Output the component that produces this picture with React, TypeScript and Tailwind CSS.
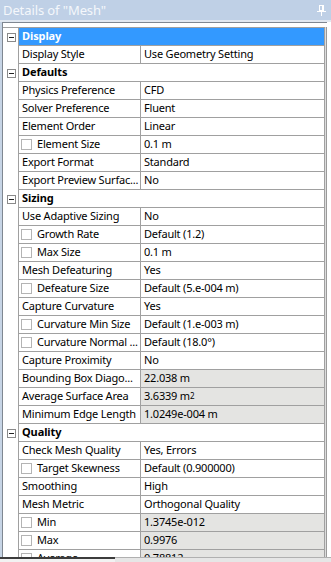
import React from "react";

type Row =
  | { kind: "h"; label: string; selected?: boolean }
  | { kind: "r"; label: string; value: React.ReactNode; check?: boolean; gray?: boolean };

const rows: Row[] = [
  { kind: "h", label: "Display", selected: true },
  { kind: "r", label: "Display Style", value: "Use Geometry Setting" },
  { kind: "h", label: "Defaults" },
  { kind: "r", label: "Physics Preference", value: "CFD" },
  { kind: "r", label: "Solver Preference", value: "Fluent" },
  { kind: "r", label: "Element Order", value: "Linear" },
  { kind: "r", label: "Element Size", value: "0.1 m", check: true },
  { kind: "r", label: "Export Format", value: "Standard" },
  { kind: "r", label: "Export Preview Surfac...", value: "No" },
  { kind: "h", label: "Sizing" },
  { kind: "r", label: "Use Adaptive Sizing", value: "No" },
  { kind: "r", label: "Growth Rate", value: "Default (1.2)", check: true },
  { kind: "r", label: "Max Size", value: "0.1 m", check: true },
  { kind: "r", label: "Mesh Defeaturing", value: "Yes" },
  { kind: "r", label: "Defeature Size", value: "Default (5.e-004 m)", check: true },
  { kind: "r", label: "Capture Curvature", value: "Yes" },
  { kind: "r", label: "Curvature Min Size", value: "Default (1.e-003 m)", check: true },
  { kind: "r", label: "Curvature Normal ...", value: "Default (18.0°)", check: true },
  { kind: "r", label: "Capture Proximity", value: "No" },
  { kind: "r", label: "Bounding Box Diago...", value: "22.038 m", gray: true },
  {
    kind: "r",
    label: "Average Surface Area",
    value: (
      <span>
        3.6339 m<sup className="text-[8px] relative top-[-1px]">2</sup>
      </span>
    ),
    gray: true,
  },
  { kind: "r", label: "Minimum Edge Length", value: "1.0249e-004 m", gray: true },
  { kind: "h", label: "Quality" },
  { kind: "r", label: "Check Mesh Quality", value: "Yes, Errors" },
  { kind: "r", label: "Target Skewness", value: "Default (0.900000)", check: true },
  { kind: "r", label: "Smoothing", value: "High" },
  { kind: "r", label: "Mesh Metric", value: "Orthogonal Quality" },
  { kind: "r", label: "Min", value: "1.3745e-012", check: true, gray: true },
  { kind: "r", label: "Max", value: "0.9976", check: true, gray: true },
  { kind: "r", label: "Average", value: "0.78812", check: true, gray: true },
];

function MinusBox() {
  return (
    <div className="ml-[4px] w-[9px] h-[9px] border border-[#8a8a8a] bg-white flex items-center justify-center">
      <div className="w-[5px] h-px bg-[#222]" />
    </div>
  );
}

function CheckBox() {
  return <div className="w-[11px] h-[11px] border border-[#b4b4b4] bg-white shrink-0 mr-[5px]" />;
}

function PinIcon() {
  return (
    <svg width="9" height="11" viewBox="0 0 9 11" className="block">
      <rect x="2.5" y="0.5" width="4" height="5" fill="none" stroke="#ffffff" strokeWidth="1" />
      <rect x="5" y="1" width="1" height="4" fill="#ffffff" />
      <rect x="0" y="6" width="9" height="1" fill="#ffffff" />
      <rect x="4" y="7" width="1" height="4" fill="#ffffff" />
    </svg>
  );
}

export default function App() {
  return (
    <div
      className="w-[331px] h-[562px] overflow-hidden flex flex-col bg-white text-black"
      style={{ fontFamily: '"Noto Sans", "Liberation Sans", sans-serif' }}
    >
      <div className="h-[20px] shrink-0 bg-[#bfd0e6] flex items-center justify-between pl-[3px] pr-[5px]">
        <span className="text-[13px] text-[#f4f7fb] leading-none whitespace-nowrap tracking-[-0.1px]">Details of "Mesh"</span>
        <PinIcon />
      </div>
      <div className="h-[2px] shrink-0 bg-[#e1e8f1]" />
      <div className="flex-1 min-h-0 flex overflow-hidden">
        <div className="w-[2px] shrink-0 bg-[#c6d4e5]" />
        <div className="w-[325px] shrink-0 border-l border-t border-[#7f8791] bg-white pt-[4px] flex">
          <div className="w-[322px] shrink-0 border-t border-r border-[#a0a0a0] self-start">
            {rows.map((r, i) =>
              r.kind === "h" ? (
                <div key={i} className="flex h-[18px]">
                  <div className="w-[15px] shrink-0 flex items-center">
                    <MinusBox />
                  </div>
                  <div
                    className={
                      "flex-1 flex items-center pl-[3px] border-l border-b border-[#a0a0a0] text-[11px] tracking-[-0.1px] font-bold whitespace-nowrap " +
                      (r.selected ? "bg-[#3399ff] text-white" : "bg-white")
                    }
                  >
                    {r.label}
                  </div>
                </div>
              ) : (
                <div key={i} className="flex h-[18px]">
                  <div className="w-[15px] shrink-0" />
                  <div className="flex-1 flex border-l border-b border-[#a0a0a0] text-[11px] tracking-[-0.2px] whitespace-nowrap">
                    <div
                      className={
                        "w-[121px] shrink-0 flex items-center overflow-hidden " + (r.check ? "pl-[2px]" : "pl-[3px]")
                      }
                    >
                      {r.check && <CheckBox />}
                      <span>{r.label}</span>
                    </div>
                    <div
                      className={
                        "flex-1 flex items-center pl-[3px] border-l border-[#a0a0a0] overflow-hidden " +
                        (r.gray ? "bg-[#e4e4e2]" : "bg-white")
                      }
                    >
                      {r.value}
                    </div>
                  </div>
                </div>
              )
            )}
          </div>
          <div className="w-[1px] shrink-0 bg-[#dcdcdc]" />
          <div className="w-[2px] shrink-0 bg-[#9a9a9a]" />
        </div>
        <div className="flex-1 bg-white" />
      </div>
      <div className="h-[5px] shrink-0 flex">
        <div className="w-[115px] border-t-2 border-[#3c3c3c] bg-[#f2f2f2]" />
        <div className="flex-1 border-t border-[#b0b0b0] bg-[#e6e6e6]" />
      </div>
    </div>
  );
}
